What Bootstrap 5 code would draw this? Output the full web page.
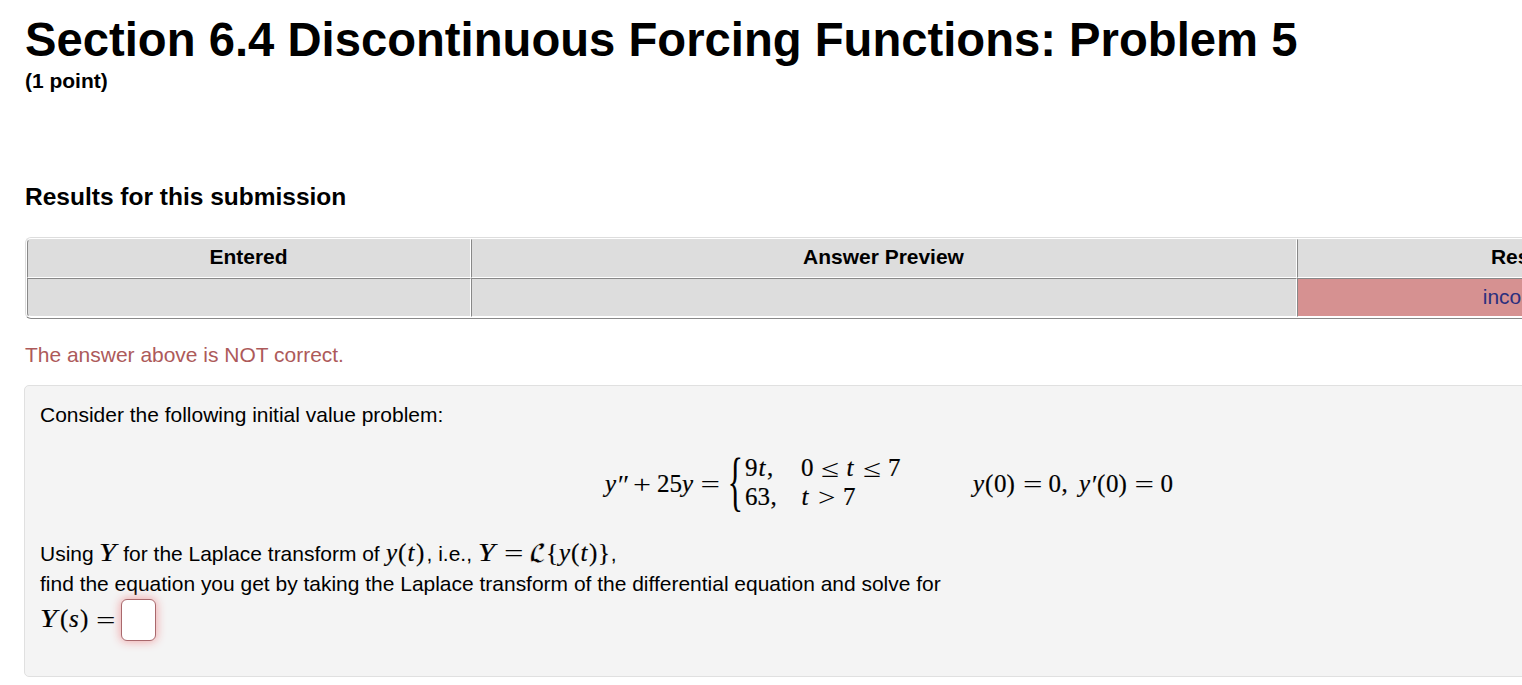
<!DOCTYPE html>
<html lang="en">
<head>
<meta charset="utf-8" />
<meta name="viewport" content="width=device-width,initial-scale=1" />
<title>Section 6.4 Discontinuous Forcing Functions: Problem 5</title>

<!--  Bootstrap 5  -->
<link
  href="https://cdn.jsdelivr.net/npm/bootstrap@5.3.3/dist/css/bootstrap.min.css"
  rel="stylesheet"
/>

<style>
  body {
    font-family:"Liberation Sans", Arial, sans-serif;
    font-size:20.98px; line-height:30px; color:#000; background:#fff;
    padding:0 0 0 25px;
  }
  .problem-title  { font-size:47.23px; line-height:60px; padding-top:10px; }
  .problem-points { line-height:22px; }
  .results-title  { font-size:24.5px; line-height:30px; margin-top:90px; }

  .results { width:1727px; height:82px; table-layout:fixed; margin-top:25px; padding:1px;
             border:1px solid; border-color:#ddd #888 #888 #ddd;
             border-collapse:separate; border-spacing:0; border-radius:6px; }
  .results th, .results td { height:39px; padding:0 1px 2px 0; text-align:center; background:#ddd;
             border:1px solid; border-color:#888 #fff #fff #888; }
  .results th { border-top-color:#ddd; padding-bottom:3px; }
  .results tr:first-child > :first-child { border-top-left-radius:4px; }
  .results tr:last-child > :first-child  { border-bottom-left-radius:4px; }
  .results .incorrect { background:#d69191; color:#2a2f7e; }
  .result-note { color:#ad5a5a; margin-top:21px; }

  .problem-body { width:1727px; height:292px; margin:15px 0 0 -1px; padding:14px 15px;
                  background:#f4f4f4; border:1px solid #e0e0e0; border-radius:5px; }
  .equation { height:90px; margin-top:10px; }
  .using-line { margin-top:9px; }

  /* math is set as svg text, one x per symbol */
  .tex { font-family:"Liberation Serif", serif; font-size:25px; overflow:visible; display:block;
         stroke:#000; stroke-width:.2px; }
  .tex .it { font-style:italic; }
  .tex .op { stroke-width:0; }
  .tex .prime { font-style:italic; font-size:28px; stroke-width:0; }
  .tex .script { font-family:"DejaVu Math TeX Gyre", "DejaVu Serif", serif; font-size:22px; stroke:#f4f4f4; stroke-width:.7px; }
  .tex-inline { height:30px; }
  .answer-box { width:35px; height:42px; border:1px solid #a9686c; border-radius:6px; background:#fff;
                box-shadow:0 0 10px 1px #f0a9ab; }
</style>
</head>

<body class="overflow-hidden">

<h1 class="problem-title fw-bold mb-0">Section 6.4 Discontinuous Forcing Functions: Problem 5</h1>
<div class="problem-points fw-bold">(1 point)</div>

<h2 class="results-title fw-bold mb-0">Results for this submission</h2>

<table class="results">
  <colgroup><col style="width:444px"><col style="width:826px"><col></colgroup>
  <tr><th>Entered</th><th>Answer Preview</th><th>Result</th></tr>
  <tr><td></td><td></td><td class="incorrect">incorrect</td></tr>
</table>

<div class="result-note">The answer above is NOT correct.</div>

<div class="problem-body">
  <div>Consider the following initial value problem:</div>

  <div class="equation">
    <svg class="tex" width="1200" height="90">
      <text y="52"><tspan class="it" x="565">y</tspan><tspan class="prime" x="576" dy="2">″</tspan></text>
      <text class="op" x="593" y="53" textLength="18" lengthAdjust="spacingAndGlyphs">+</text>
      <text y="52"><tspan x="617 629.5">25</tspan><tspan class="it" x="642">y</tspan></text>
      <text class="op" x="660.5" y="53" textLength="19.5" lengthAdjust="spacingAndGlyphs">=</text>
      <text class="op" transform="translate(687.5 63) scale(1.3 2.65)">{</text>

      <text y="36"><tspan x="705">9</tspan><tspan class="it" x="718.5">t</tspan><tspan x="727">,</tspan><tspan x="761">0</tspan></text>
      <text class="op" x="781" y="37" textLength="18" lengthAdjust="spacingAndGlyphs">≤</text>
      <text class="it" x="806.5" y="36">t</text>
      <text class="op" x="823" y="37" textLength="18" lengthAdjust="spacingAndGlyphs">≤</text>
      <text x="848" y="36">7</text>

      <text y="65"><tspan x="705 717.5 730.5">63,</tspan><tspan class="it" x="761.5">t</tspan></text>
      <text class="op" x="778" y="66" textLength="17.5" lengthAdjust="spacingAndGlyphs">&gt;</text>
      <text x="803" y="65">7</text>

      <text y="52"><tspan class="it" x="933">y</tspan><tspan x="945 954 966.5">(0)</tspan></text>
      <text class="op" x="983" y="53" textLength="19.5" lengthAdjust="spacingAndGlyphs">=</text>
      <text y="52"><tspan x="1008.5 1021.5">0,</tspan><tspan class="it" x="1039">y</tspan><tspan class="prime" x="1050" dy="2">′</tspan><tspan x="1057 1066 1078.5" dy="-2">(0)</tspan></text>
      <text class="op" x="1094.5" y="53" textLength="19.5" lengthAdjust="spacingAndGlyphs">=</text>
      <text x="1120.5" y="52">0</text>
    </svg>
  </div>

  <div class="using-line d-flex">
    <span>Using&nbsp;</span>
    <svg class="tex tex-inline" width="18"><text class="it" x="0" y="22" textLength="17" lengthAdjust="spacingAndGlyphs">Y</text></svg>
    <span>&nbsp;for the Laplace transform of&nbsp;</span>
    <svg class="tex tex-inline" width="41"><text y="22"><tspan class="it" x="0">y</tspan><tspan x="12">(</tspan><tspan class="it" x="21.5">t</tspan><tspan x="30">)</tspan></text></svg>
    <span>, i.e.,&nbsp;</span>
    <svg class="tex tex-inline" width="133">
      <text class="it" x="0" y="22" textLength="17" lengthAdjust="spacingAndGlyphs">Y</text>
      <text class="op" x="26" y="23" textLength="19.5" lengthAdjust="spacingAndGlyphs">=</text>
      <text class="script" x="51" y="22" textLength="17" lengthAdjust="spacingAndGlyphs">𝓛</text>
      <text y="22"><tspan x="68">{</tspan><tspan class="it" x="81">y</tspan><tspan x="93">(</tspan><tspan class="it" x="102.5">t</tspan><tspan x="111">)</tspan><tspan x="120">}</tspan></text>
    </svg>
    <span>,</span>
  </div>
  <div>find the equation you get by taking the Laplace transform of the differential equation and solve for</div>
  <div class="d-flex">
    <svg class="tex tex-inline" width="81">
      <text class="it" x="0" y="28" textLength="17" lengthAdjust="spacingAndGlyphs">Y</text>
      <text y="28"><tspan x="20">(</tspan><tspan class="it" x="29">s</tspan><tspan x="40">)</tspan></text>
      <text class="op" x="56" y="30" textLength="19.5" lengthAdjust="spacingAndGlyphs">=</text>
    </svg>
    <div class="answer-box"></div>
  </div>
</div>

<!-- Bootstrap + Popper -->
<script src="https://cdn.jsdelivr.net/npm/bootstrap@5.3.3/dist/js/bootstrap.bundle.min.js"></script>
</body>
</html>
